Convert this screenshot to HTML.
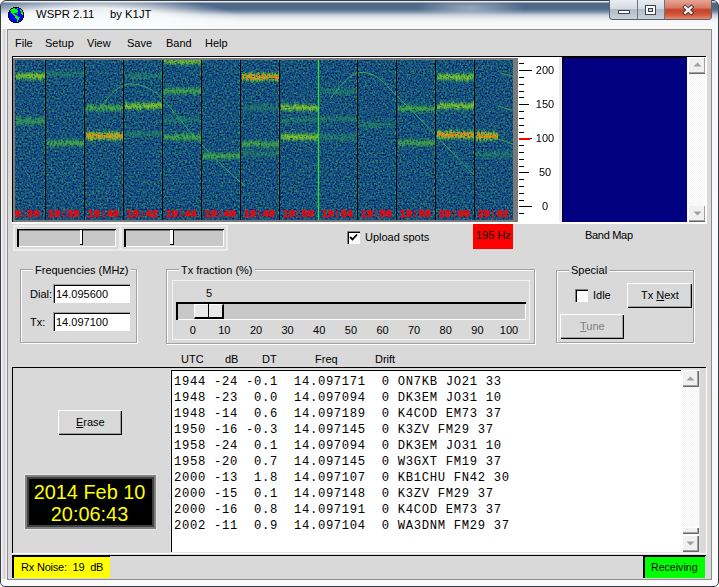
<!DOCTYPE html>
<html><head><meta charset="utf-8">
<style>
html,body{margin:0;padding:0;width:719px;height:587px;overflow:hidden;background:#fff;}
body{position:relative;font-family:"Liberation Sans",sans-serif;font-size:11px;color:#000;}
.a{position:absolute;}
.t{position:absolute;white-space:pre;line-height:13px;}
.grp{position:absolute;border:1px solid #a0a0a0;box-shadow:inset 1px 1px 0 #fff,1px 1px 0 #fff;}
.grpt{position:absolute;background:#d9d9d9;padding:0 2px;white-space:pre;line-height:13px;}
.btn{position:absolute;background:#d9d9d9;box-sizing:border-box;border-top:1px solid #fff;border-left:1px solid #fff;box-shadow:inset -1px -1px 0 #000,inset -2px -2px 0 #a0a0a0;text-align:center;line-height:13px;}
.inp{position:absolute;background:#fff;box-sizing:border-box;border-top:1px solid #a0a0a0;border-left:1px solid #a0a0a0;box-shadow:inset 1px 1px 0 #000;}
.mono{font-family:"Liberation Mono",monospace;font-size:13.33px;line-height:16px;white-space:pre;}
.sbtn{position:absolute;box-sizing:border-box;width:17px;height:17px;background:#f0f0f0;border-top:1px solid #fff;border-left:1px solid #fff;box-shadow:inset -1px -1px 0 #696969,inset -2px -2px 0 #a0a0a0;}
.track{position:absolute;background-color:#f4f4f4;background-image:linear-gradient(45deg,#fff 25%,transparent 25%,transparent 75%,#fff 75%),linear-gradient(45deg,#fff 25%,transparent 25%,transparent 75%,#fff 75%);background-size:2px 2px;background-position:0 0,1px 1px;}
.tk{position:absolute;height:1px;background:#000;left:519px;}
.lb{position:absolute;width:20px;text-align:center;line-height:12px;font-size:11px;}
.sl{position:absolute;width:20px;text-align:center;line-height:12px;font-size:11px;}
</style></head>
<body>
<div class="a" style="left:0;top:0;width:717px;height:585px;border:1px solid #3a3f46;border-radius:6px 6px 5px 5px;background:linear-gradient(#f0f3f6 0px,#e0e6ec 1px,#4f6989 2px,#4f6989 8px,#7d92aa 11px,#c5d0dc 14px,#eef1f4 18px,#f7f8f9 22px,#f8f8f8 28px,#fafafa 100%);"></div>
<div class="a" style="left:1px;top:1px;width:300px;height:28px;background:radial-gradient(ellipse 150px 22px at 90px 18px,rgba(250,251,252,0.92) 50%,rgba(250,251,252,0) 100%);"></div>
<div class="a" style="left:400px;top:1px;width:140px;height:16px;background:radial-gradient(ellipse 55px 10px at 70px 7px,rgba(240,244,248,0.45),rgba(240,244,248,0) 100%);"></div>
<div class="a" style="left:1px;top:29px;width:6px;height:550px;background:linear-gradient(90deg,#ececec 0px,#f8f8f8 1px,#dcd8dc 2px,#d4d0d4 4px,#ececec 5px,#f6f6f6 6px);"></div>
<!-- globe icon -->
<svg class="a" style="left:8px;top:7px" width="16" height="16" viewBox="0 0 16 16" shape-rendering="crispEdges"><rect x="5" y="0" width="6" height="1" fill="#000000"/><rect x="3" y="1" width="2" height="1" fill="#000000"/><rect x="5" y="1" width="2" height="1" fill="#00ff00"/><rect x="7" y="1" width="2" height="1" fill="#0000ff"/><rect x="9" y="1" width="1" height="1" fill="#00ff00"/><rect x="10" y="1" width="2" height="1" fill="#0000ff"/><rect x="12" y="1" width="1" height="1" fill="#000000"/><rect x="2" y="2" width="1" height="1" fill="#000000"/><rect x="3" y="2" width="6" height="1" fill="#00ff00"/><rect x="9" y="2" width="3" height="1" fill="#0000ff"/><rect x="12" y="2" width="1" height="1" fill="#00ff00"/><rect x="13" y="2" width="1" height="1" fill="#000000"/><rect x="1" y="3" width="1" height="1" fill="#000000"/><rect x="2" y="3" width="8" height="1" fill="#00ff00"/><rect x="10" y="3" width="2" height="1" fill="#0000ff"/><rect x="12" y="3" width="2" height="1" fill="#00ff00"/><rect x="14" y="3" width="1" height="1" fill="#000000"/><rect x="1" y="4" width="1" height="1" fill="#000000"/><rect x="2" y="4" width="1" height="1" fill="#0000ff"/><rect x="3" y="4" width="7" height="1" fill="#00ff00"/><rect x="10" y="4" width="3" height="1" fill="#0000ff"/><rect x="13" y="4" width="1" height="1" fill="#00ff00"/><rect x="14" y="4" width="1" height="1" fill="#000000"/><rect x="0" y="5" width="1" height="1" fill="#000000"/><rect x="1" y="5" width="2" height="1" fill="#0000ff"/><rect x="3" y="5" width="6" height="1" fill="#00ff00"/><rect x="9" y="5" width="4" height="1" fill="#0000ff"/><rect x="13" y="5" width="2" height="1" fill="#00ff00"/><rect x="15" y="5" width="1" height="1" fill="#000000"/><rect x="0" y="6" width="1" height="1" fill="#000000"/><rect x="1" y="6" width="3" height="1" fill="#0000ff"/><rect x="4" y="6" width="2" height="1" fill="#00ff00"/><rect x="6" y="6" width="3" height="1" fill="#0000ff"/><rect x="9" y="6" width="1" height="1" fill="#00ff00"/><rect x="10" y="6" width="3" height="1" fill="#0000ff"/><rect x="13" y="6" width="2" height="1" fill="#00ff00"/><rect x="15" y="6" width="1" height="1" fill="#000000"/><rect x="0" y="7" width="1" height="1" fill="#000000"/><rect x="1" y="7" width="4" height="1" fill="#0000ff"/><rect x="5" y="7" width="2" height="1" fill="#00ff00"/><rect x="7" y="7" width="7" height="1" fill="#0000ff"/><rect x="14" y="7" width="1" height="1" fill="#00ff00"/><rect x="15" y="7" width="1" height="1" fill="#000000"/><rect x="0" y="8" width="1" height="1" fill="#000000"/><rect x="1" y="8" width="5" height="1" fill="#0000ff"/><rect x="6" y="8" width="3" height="1" fill="#00ff00"/><rect x="9" y="8" width="6" height="1" fill="#0000ff"/><rect x="15" y="8" width="1" height="1" fill="#000000"/><rect x="0" y="9" width="1" height="1" fill="#000000"/><rect x="1" y="9" width="6" height="1" fill="#0000ff"/><rect x="7" y="9" width="3" height="1" fill="#00ff00"/><rect x="10" y="9" width="5" height="1" fill="#0000ff"/><rect x="15" y="9" width="1" height="1" fill="#000000"/><rect x="0" y="10" width="1" height="1" fill="#000000"/><rect x="1" y="10" width="6" height="1" fill="#0000ff"/><rect x="7" y="10" width="5" height="1" fill="#00ff00"/><rect x="12" y="10" width="3" height="1" fill="#0000ff"/><rect x="15" y="10" width="1" height="1" fill="#000000"/><rect x="1" y="11" width="1" height="1" fill="#000000"/><rect x="2" y="11" width="6" height="1" fill="#0000ff"/><rect x="8" y="11" width="3" height="1" fill="#00ff00"/><rect x="11" y="11" width="3" height="1" fill="#0000ff"/><rect x="14" y="11" width="1" height="1" fill="#000000"/><rect x="1" y="12" width="1" height="1" fill="#000000"/><rect x="2" y="12" width="7" height="1" fill="#0000ff"/><rect x="9" y="12" width="2" height="1" fill="#00ff00"/><rect x="11" y="12" width="3" height="1" fill="#0000ff"/><rect x="14" y="12" width="1" height="1" fill="#000000"/><rect x="2" y="13" width="1" height="1" fill="#000000"/><rect x="3" y="13" width="6" height="1" fill="#0000ff"/><rect x="9" y="13" width="1" height="1" fill="#00ff00"/><rect x="10" y="13" width="3" height="1" fill="#0000ff"/><rect x="13" y="13" width="1" height="1" fill="#000000"/><rect x="3" y="14" width="2" height="1" fill="#000000"/><rect x="5" y="14" width="4" height="1" fill="#0000ff"/><rect x="9" y="14" width="1" height="1" fill="#00ff00"/><rect x="10" y="14" width="1" height="1" fill="#0000ff"/><rect x="11" y="14" width="2" height="1" fill="#000000"/><rect x="5" y="15" width="6" height="1" fill="#000000"/></svg>
<div class="t" style="left:36px;top:8px;font-size:11.3px;">WSPR 2.11</div>
<div class="t" style="left:110px;top:8px;font-size:11.3px;">by K1JT</div>

<!-- window buttons -->
<div class="a" style="left:609px;top:0px;width:101px;height:19px;border:1px solid #5a6470;border-top:none;border-radius:0 0 4px 4px;overflow:hidden;background:#6a7480;">
 <div class="a" style="left:0;top:0;width:27px;height:19px;background:linear-gradient(#e8edf2,#d3dae2 45%,#b2bcc7 50%,#c9d2dc 100%);"></div>
 <div class="a" style="left:28px;top:0;width:26px;height:19px;background:linear-gradient(#e8edf2,#d3dae2 45%,#b2bcc7 50%,#c9d2dc 100%);"></div>
 <div class="a" style="left:55px;top:0;width:46px;height:19px;background:linear-gradient(#e8a594,#d77a66 40%,#c2412a 52%,#d45a3e 80%,#e89070 100%);"></div>
 <div class="a" style="left:8px;top:10px;width:10px;height:2px;background:#fff;border:1px solid #3a4250;"></div>
 <div class="a" style="left:35px;top:5px;width:9px;height:8px;border:1px solid #3a4250;box-shadow:inset 0 0 0 2px #fff,inset 0 0 0 3px #3a4250;background:#ccd3db;"></div>
 <svg class="a" style="left:72px;top:4px" width="13" height="12" viewBox="0 0 13 12"><path d="M3.2 3.2 L9.3 8.8 M9.3 3.2 L3.2 8.8" stroke="#4a3838" stroke-width="4.2" stroke-linecap="square"/><path d="M3.2 3.2 L9.3 8.8 M9.3 3.2 L3.2 8.8" stroke="#f4f4f4" stroke-width="2.3" stroke-linecap="square"/></svg>
</div>

<!-- client -->
<div class="a" style="left:7px;top:29px;width:703px;height:549px;background:#d9d9d9;border:1px solid #8c8c8c;"></div>

<!-- menu -->
<div class="t" style="left:15px;top:37px;">File</div>
<div class="t" style="left:45px;top:37px;">Setup</div>
<div class="t" style="left:87px;top:37px;">View</div>
<div class="t" style="left:127px;top:37px;">Save</div>
<div class="t" style="left:166px;top:37px;">Band</div>
<div class="t" style="left:205px;top:37px;">Help</div>

<!-- waterfall frame -->
<div class="a" style="left:12px;top:56px;width:695px;height:168px;background:#fff;"></div>
<div class="a" style="left:12px;top:56px;width:694px;height:166px;background:#000;"></div>
<div class="a" style="left:13px;top:57px;width:505px;height:165px;background:#fff;"></div>
<div class="a" style="left:13px;top:58px;width:505px;height:164px;background:#7a7a7a;"></div>
<svg class="a" style="left:15px;top:60px" width="498" height="160" viewBox="15 60 498 160">
<defs><filter id="nz" x="15" y="60" width="498" height="160" filterUnits="userSpaceOnUse" color-interpolation-filters="sRGB"><feTurbulence type="fractalNoise" baseFrequency="0.55" numOctaves="2" seed="7" result="t"/><feColorMatrix type="matrix" values="2.0 0 0 0 -0.5  2.0 0 0 0 -0.5  2.0 0 0 0 -0.5  0 0 0 0 1"/><feComponentTransfer><feFuncR type="table" tableValues="0.04 0.07 0.10 0.16"/><feFuncG type="table" tableValues="0.10 0.25 0.38 0.56"/><feFuncB type="table" tableValues="0.42 0.50 0.50 0.34"/></feComponentTransfer></filter><filter id="vs" x="15" y="60" width="498" height="160" filterUnits="userSpaceOnUse" color-interpolation-filters="sRGB"><feTurbulence type="fractalNoise" baseFrequency="0.9 0.6" numOctaves="1" seed="5" result="n"/><feTurbulence type="fractalNoise" baseFrequency="0.35 0.015" numOctaves="1" seed="9" result="v"/><feComposite in="n" in2="v" operator="arithmetic" k1="3" k2="0" k3="0" k4="0" result="m"/><feColorMatrix in="m" type="matrix" values="0 0 0 0 0.19  0 0 0 0 0.63  0 0 0 0 0.31  4 0 0 0 -1.6"/></filter><filter id="bl" x="15" y="60" width="498" height="160" filterUnits="userSpaceOnUse" color-interpolation-filters="sRGB"><feTurbulence type="fractalNoise" baseFrequency="0.6 0.08" numOctaves="1" seed="4" result="dn"/><feColorMatrix in="dn" type="matrix" values="0 0 0 0 0.5  2 0 0 0 -0.5  0 0 0 0 0  0 0 0 0 1" result="dm"/><feDisplacementMap in="SourceGraphic" in2="dm" scale="4" xChannelSelector="R" yChannelSelector="G" result="disp"/><feGaussianBlur in="disp" stdDeviation="0.6 1.4" result="b"/><feTurbulence type="fractalNoise" baseFrequency="0.55" numOctaves="2" seed="7" result="n"/><feColorMatrix in="n" type="matrix" values="0 0 0 0 0  0 0 0 0 0  0 0 0 0 0  3.5 0 0 0 -0.45" result="na"/><feComposite in="b" in2="na" operator="in"/></filter><filter id="bl2" x="15" y="60" width="498" height="160" filterUnits="userSpaceOnUse" color-interpolation-filters="sRGB"><feTurbulence type="fractalNoise" baseFrequency="0.6 0.08" numOctaves="1" seed="4" result="dn"/><feColorMatrix in="dn" type="matrix" values="0 0 0 0 0.5  2 0 0 0 -0.5  0 0 0 0 0  0 0 0 0 1" result="dm"/><feDisplacementMap in="SourceGraphic" in2="dm" scale="4" xChannelSelector="R" yChannelSelector="G" result="disp"/><feGaussianBlur in="disp" stdDeviation="0.5 0.9" result="b"/><feTurbulence type="fractalNoise" baseFrequency="0.55" numOctaves="2" seed="7" result="n"/><feColorMatrix in="n" type="matrix" values="0 0 0 0 0  0 0 0 0 0  0 0 0 0 0  4 0 0 0 -1.1" result="na"/><feComposite in="b" in2="na" operator="in"/></filter><filter id="bl3" x="15" y="60" width="498" height="160" filterUnits="userSpaceOnUse" color-interpolation-filters="sRGB"><feTurbulence type="fractalNoise" baseFrequency="0.6 0.08" numOctaves="1" seed="4" result="dn"/><feColorMatrix in="dn" type="matrix" values="0 0 0 0 0.5  2 0 0 0 -0.5  0 0 0 0 0  0 0 0 0 1" result="dm"/><feDisplacementMap in="SourceGraphic" in2="dm" scale="4" xChannelSelector="R" yChannelSelector="G" result="disp"/><feGaussianBlur in="disp" stdDeviation="0.5 0.7" result="b"/><feTurbulence type="fractalNoise" baseFrequency="0.55" numOctaves="2" seed="7" result="n"/><feColorMatrix in="n" type="matrix" values="0 0 0 0 0  0 0 0 0 0  0 0 0 0 0  5 0 0 0 -2.1" result="na"/><feComposite in="b" in2="na" operator="in"/></filter></defs>
<rect x="15" y="60" width="498" height="160" fill="#1a5585"/>
<rect x="15" y="60" width="498" height="160" filter="url(#nz)"/>
<rect x="15" y="60" width="498" height="160" fill="#30a050" filter="url(#vs)" opacity="0.35"/>
<g filter="url(#bl)"><rect x="16" y="73" width="29" height="6" fill="#40b040" opacity="1"/><rect x="16" y="117.5" width="29" height="7" fill="#38a050" opacity="0.75"/><rect x="47" y="72" width="37" height="4" fill="#2a9a5a" opacity="0.6"/><rect x="47" y="140.5" width="37" height="5" fill="#38a845" opacity="0.9"/><rect x="86" y="105.5" width="37" height="5" fill="#38a845" opacity="0.9"/><rect x="86" y="132.5" width="37" height="7" fill="#48b038" opacity="1"/><rect x="125" y="103" width="37" height="6" fill="#40b040" opacity="1"/><rect x="125" y="74" width="37" height="4" fill="#2a9a5a" opacity="0.6"/><rect x="125" y="132" width="37" height="4" fill="#2a9a5a" opacity="0.6"/><rect x="164" y="58" width="37" height="6" fill="#40b040" opacity="1"/><rect x="164" y="88.5" width="37" height="5" fill="#38a845" opacity="0.9"/><rect x="164" y="118" width="37" height="4" fill="#2a9a5a" opacity="0.6"/><rect x="164" y="134.5" width="37" height="5" fill="#38a845" opacity="0.9"/><rect x="203" y="153.5" width="37" height="5" fill="#38a845" opacity="0.9"/><rect x="242" y="73.5" width="37" height="7" fill="#48b038" opacity="1"/><rect x="242" y="106" width="37" height="4" fill="#2a9a5a" opacity="0.6"/><rect x="242" y="141.5" width="37" height="5" fill="#38a845" opacity="0.9"/><rect x="242" y="152" width="37" height="4" fill="#2a9a5a" opacity="0.6"/><rect x="281" y="104.5" width="37" height="6" fill="#40b040" opacity="1"/><rect x="281" y="134" width="37" height="6" fill="#40b040" opacity="1"/><rect x="281" y="118" width="37" height="4" fill="#2a9a5a" opacity="0.6"/><rect x="320" y="89" width="37" height="4" fill="#2a9a5a" opacity="0.6"/><rect x="320" y="117" width="37" height="4" fill="#2a9a5a" opacity="0.6"/><rect x="320" y="135" width="37" height="4" fill="#2a9a5a" opacity="0.6"/><rect x="359" y="123" width="37" height="4" fill="#2a9a5a" opacity="0.6"/><rect x="398" y="106.0" width="37" height="5" fill="#38a845" opacity="0.9"/><rect x="398" y="140.5" width="37" height="5" fill="#38a845" opacity="0.9"/><rect x="437" y="74" width="37" height="6" fill="#40b040" opacity="1"/><rect x="437" y="103" width="37" height="6" fill="#40b040" opacity="1"/><rect x="437" y="131.5" width="37" height="7" fill="#48b038" opacity="1"/><rect x="476" y="132.5" width="22" height="7" fill="#48b038" opacity="1"/><rect x="476" y="153" width="37" height="4" fill="#2a9a5a" opacity="0.6"/></g>
<g filter="url(#bl2)"><rect x="16" y="74.5" width="29" height="3" fill="#a8c820" opacity="0.75"/><rect x="47" y="142" width="37" height="2" fill="#80c030" opacity="0.35"/><rect x="86" y="107" width="37" height="2" fill="#80c030" opacity="0.35"/><rect x="86" y="133.5" width="37" height="5" fill="#c8c818" opacity="1"/><rect x="125" y="104.5" width="37" height="3" fill="#a8c820" opacity="0.75"/><rect x="164" y="59.5" width="37" height="3" fill="#a8c820" opacity="0.75"/><rect x="164" y="90" width="37" height="2" fill="#80c030" opacity="0.35"/><rect x="164" y="136" width="37" height="2" fill="#80c030" opacity="0.35"/><rect x="203" y="155" width="37" height="2" fill="#80c030" opacity="0.35"/><rect x="242" y="74.5" width="37" height="5" fill="#c8c818" opacity="1"/><rect x="242" y="143" width="37" height="2" fill="#80c030" opacity="0.35"/><rect x="281" y="106.0" width="37" height="3" fill="#a8c820" opacity="0.75"/><rect x="281" y="135.5" width="37" height="3" fill="#a8c820" opacity="0.75"/><rect x="398" y="107.5" width="37" height="2" fill="#80c030" opacity="0.35"/><rect x="398" y="142" width="37" height="2" fill="#80c030" opacity="0.35"/><rect x="437" y="75.5" width="37" height="3" fill="#a8c820" opacity="0.75"/><rect x="437" y="104.5" width="37" height="3" fill="#a8c820" opacity="0.75"/><rect x="437" y="132.5" width="37" height="5" fill="#c8c818" opacity="1"/><rect x="476" y="133.5" width="22" height="5" fill="#c8c818" opacity="1"/></g>
<g filter="url(#bl3)"><rect x="16" y="75" width="29" height="2" fill="#d8a018" opacity="0.35"/><rect x="86" y="134" width="37" height="4" fill="#f06818" opacity="1"/><rect x="125" y="105" width="37" height="2" fill="#d8a018" opacity="0.35"/><rect x="164" y="60" width="37" height="2" fill="#d8a018" opacity="0.35"/><rect x="242" y="75" width="37" height="4" fill="#f06818" opacity="1"/><rect x="281" y="106.5" width="37" height="2" fill="#d8a018" opacity="0.35"/><rect x="281" y="136" width="37" height="2" fill="#d8a018" opacity="0.35"/><rect x="437" y="76" width="37" height="2" fill="#d8a018" opacity="0.35"/><rect x="437" y="105" width="37" height="2" fill="#d8a018" opacity="0.35"/><rect x="437" y="133" width="37" height="4" fill="#f06818" opacity="1"/><rect x="476" y="134" width="22" height="4" fill="#f06818" opacity="1"/></g>
<path d="M100,108 C110,94 120,84 130,84 C145,84 155,91 163,99 C178,116 200,148 245,186" fill="none" stroke="#3cb455" stroke-width="1" opacity="0.9"/>
<path d="M330,99 C340,86 350,73 361,72.5 C373,72 381,79 390,89 C400,100 410,108 420,119 L474,175" fill="none" stroke="#3cb455" stroke-width="1" opacity="0.9"/>
<path d="M498,106 L513,110.5 M498,139 L513,144 M500,73 L513,76" fill="none" stroke="#40b040" stroke-width="1.2" opacity="0.75"/>
<line x1="44.5" y1="60" x2="44.5" y2="220" stroke="#30c040" stroke-width="1" stroke-dasharray="2 5 1 3 3 6" opacity="0.6"/>
<line x1="45.5" y1="60" x2="45.5" y2="220" stroke="#000" stroke-width="1"/>
<line x1="83.5" y1="60" x2="83.5" y2="220" stroke="#30c040" stroke-width="1" stroke-dasharray="2 5 1 3 3 6" opacity="0.6"/>
<line x1="84.5" y1="60" x2="84.5" y2="220" stroke="#000" stroke-width="1"/>
<line x1="122.5" y1="60" x2="122.5" y2="220" stroke="#30c040" stroke-width="1" stroke-dasharray="2 5 1 3 3 6" opacity="0.6"/>
<line x1="123.5" y1="60" x2="123.5" y2="220" stroke="#000" stroke-width="1"/>
<line x1="161.5" y1="60" x2="161.5" y2="220" stroke="#30c040" stroke-width="1" stroke-dasharray="2 5 1 3 3 6" opacity="0.6"/>
<line x1="162.5" y1="60" x2="162.5" y2="220" stroke="#000" stroke-width="1"/>
<line x1="200.5" y1="60" x2="200.5" y2="220" stroke="#30c040" stroke-width="1" stroke-dasharray="2 5 1 3 3 6" opacity="0.6"/>
<line x1="201.5" y1="60" x2="201.5" y2="220" stroke="#000" stroke-width="1"/>
<line x1="239.5" y1="60" x2="239.5" y2="220" stroke="#30c040" stroke-width="1" stroke-dasharray="2 5 1 3 3 6" opacity="0.6"/>
<line x1="240.5" y1="60" x2="240.5" y2="220" stroke="#000" stroke-width="1"/>
<line x1="278.5" y1="60" x2="278.5" y2="220" stroke="#30c040" stroke-width="1" stroke-dasharray="2 5 1 3 3 6" opacity="0.6"/>
<line x1="279.5" y1="60" x2="279.5" y2="220" stroke="#000" stroke-width="1"/>
<line x1="356.5" y1="60" x2="356.5" y2="220" stroke="#30c040" stroke-width="1" stroke-dasharray="2 5 1 3 3 6" opacity="0.6"/>
<line x1="357.5" y1="60" x2="357.5" y2="220" stroke="#000" stroke-width="1"/>
<line x1="395.5" y1="60" x2="395.5" y2="220" stroke="#30c040" stroke-width="1" stroke-dasharray="2 5 1 3 3 6" opacity="0.6"/>
<line x1="396.5" y1="60" x2="396.5" y2="220" stroke="#000" stroke-width="1"/>
<line x1="434.5" y1="60" x2="434.5" y2="220" stroke="#30c040" stroke-width="1" stroke-dasharray="2 5 1 3 3 6" opacity="0.6"/>
<line x1="435.5" y1="60" x2="435.5" y2="220" stroke="#000" stroke-width="1"/>
<line x1="473.5" y1="60" x2="473.5" y2="220" stroke="#30c040" stroke-width="1" stroke-dasharray="2 5 1 3 3 6" opacity="0.6"/>
<line x1="474.5" y1="60" x2="474.5" y2="220" stroke="#000" stroke-width="1"/>
<line x1="318.5" y1="60" x2="318.5" y2="220" stroke="#30e030" stroke-width="1.3"/>
<text x="14.5" y="216.8" font-family="Liberation Mono" font-weight="bold" font-size="10.5" fill="#ff0000" stroke="#ff0000" stroke-width="0.45">9:36</text>
<text x="48.0" y="216.8" font-family="Liberation Mono" font-weight="bold" font-size="10.5" fill="#ff0000" stroke="#ff0000" stroke-width="0.45">19:38</text>
<text x="87.5" y="216.8" font-family="Liberation Mono" font-weight="bold" font-size="10.5" fill="#ff0000" stroke="#ff0000" stroke-width="0.45">19:40</text>
<text x="126.5" y="216.8" font-family="Liberation Mono" font-weight="bold" font-size="10.5" fill="#ff0000" stroke="#ff0000" stroke-width="0.45">19:42</text>
<text x="165.5" y="216.8" font-family="Liberation Mono" font-weight="bold" font-size="10.5" fill="#ff0000" stroke="#ff0000" stroke-width="0.45">19:44</text>
<text x="204.5" y="216.8" font-family="Liberation Mono" font-weight="bold" font-size="10.5" fill="#ff0000" stroke="#ff0000" stroke-width="0.45">19:46</text>
<text x="243.5" y="216.8" font-family="Liberation Mono" font-weight="bold" font-size="10.5" fill="#ff0000" stroke="#ff0000" stroke-width="0.45">19:48</text>
<text x="282.5" y="216.8" font-family="Liberation Mono" font-weight="bold" font-size="10.5" fill="#ff0000" stroke="#ff0000" stroke-width="0.45">19:50</text>
<text x="321.5" y="216.8" font-family="Liberation Mono" font-weight="bold" font-size="10.5" fill="#ff0000" stroke="#ff0000" stroke-width="0.45">19:54</text>
<text x="360.5" y="216.8" font-family="Liberation Mono" font-weight="bold" font-size="10.5" fill="#ff0000" stroke="#ff0000" stroke-width="0.45">19:56</text>
<text x="399.5" y="216.8" font-family="Liberation Mono" font-weight="bold" font-size="10.5" fill="#ff0000" stroke="#ff0000" stroke-width="0.45">19:58</text>
<text x="438.5" y="216.8" font-family="Liberation Mono" font-weight="bold" font-size="10.5" fill="#ff0000" stroke="#ff0000" stroke-width="0.45">20:00</text>
<text x="477.5" y="216.8" font-family="Liberation Mono" font-weight="bold" font-size="10.5" fill="#ff0000" stroke="#ff0000" stroke-width="0.45">20:02</text>
</svg>
<!-- scale -->
<div class="a" style="left:518px;top:57px;width:44px;height:165px;background:#fff;"></div>
<div class="a" style="left:559px;top:57px;width:3px;height:165px;background:#ececec;"></div>
<div class="tk" style="top:213px;width:5px;background:#000"></div>
<div class="tk" style="top:206px;width:13px;background:#000"></div>
<div class="lb" style="left:535px;top:200px;">0</div>
<div class="tk" style="top:200px;width:5px;background:#000"></div>
<div class="tk" style="top:193px;width:5px;background:#000"></div>
<div class="tk" style="top:186px;width:5px;background:#000"></div>
<div class="tk" style="top:179px;width:5px;background:#000"></div>
<div class="tk" style="top:172px;width:10px;background:#000"></div>
<div class="lb" style="left:535px;top:166px;">50</div>
<div class="tk" style="top:166px;width:5px;background:#000"></div>
<div class="tk" style="top:159px;width:5px;background:#000"></div>
<div class="tk" style="top:152px;width:5px;background:#000"></div>
<div class="tk" style="top:145px;width:5px;background:#000"></div>
<div class="tk" style="top:138px;width:13px;background:#000"></div>
<div class="lb" style="left:535px;top:132px;">100</div>
<div class="tk" style="top:132px;width:5px;background:#000"></div>
<div class="tk" style="top:125px;width:5px;background:#000"></div>
<div class="tk" style="top:118px;width:5px;background:#000"></div>
<div class="tk" style="top:111px;width:5px;background:#000"></div>
<div class="tk" style="top:104px;width:10px;background:#000"></div>
<div class="lb" style="left:535px;top:98px;">150</div>
<div class="tk" style="top:97px;width:5px;background:#000"></div>
<div class="tk" style="top:91px;width:5px;background:#000"></div>
<div class="tk" style="top:84px;width:5px;background:#000"></div>
<div class="tk" style="top:77px;width:5px;background:#000"></div>
<div class="tk" style="top:70px;width:13px;background:#000"></div>
<div class="lb" style="left:535px;top:64px;">200</div>
<div class="tk" style="top:63px;width:5px;background:#000"></div>
<div class="a" style="left:519px;top:138px;width:11px;height:2px;background:#ff0000"></div>
<!-- band map -->
<div class="a" style="left:562px;top:57px;width:125px;height:165px;background:#000080;box-sizing:border-box;border-left:1px solid #000;border-top:1px solid #000;"></div>
<!-- scrollbar -->
<div class="track" style="left:687px;top:57px;width:19px;height:165px;"></div>
<div class="sbtn" style="left:688px;top:57px;width:18px;"></div>
<svg class="a" style="left:691px;top:58px" width="13" height="13"><path d="M2.5 8.5 L6.5 4.5 L10.5 8.5 Z" fill="#a0a0a0"/></svg>
<div class="sbtn" style="left:688px;top:205px;width:18px;"></div>
<svg class="a" style="left:691px;top:207px" width="13" height="13"><path d="M2.5 4.5 L6.5 8.5 L10.5 4.5 Z" fill="#a0a0a0"/></svg>
<div class="a" style="left:705px;top:57px;width:1px;height:165px;background:#fff;"></div>

<!-- sliders -->
<div class="a" style="left:13px;top:225px;width:215px;height:26px;background:#ececec;"></div>
<div class="a" style="left:15px;top:227px;width:104px;height:22px;background:#d9d9d9;"></div>
<div class="a" style="left:122px;top:227px;width:104px;height:22px;background:#d9d9d9;"></div>
<div class="a" style="left:17px;top:229px;width:99px;height:18px;background:#c8c8c8;border-top:1px solid #000;border-left:2px solid #000;box-sizing:border-box;box-shadow:inset -1px -1px 0 #fff,inset 0 1px 0 #707070;"></div>
<div class="a" style="left:124px;top:229px;width:100px;height:18px;background:#c8c8c8;border-top:1px solid #000;border-left:2px solid #000;box-sizing:border-box;box-shadow:inset -1px -1px 0 #fff,inset 0 1px 0 #707070;"></div>
<div class="a" style="left:80px;top:230px;width:3px;height:15px;background:#fff;border-right:1px solid #000;border-bottom:1px solid #000;box-sizing:border-box;"></div>
<div class="a" style="left:170px;top:230px;width:4px;height:15px;background:#fff;border-right:1px solid #000;border-bottom:1px solid #000;box-sizing:border-box;"></div>

<!-- upload spots -->
<div class="a" style="left:347px;top:231px;width:13px;height:13px;background:#fff;box-sizing:border-box;border-top:1px solid #808080;border-left:1px solid #808080;box-shadow:inset 1px 1px 0 #000;"></div>
<svg class="a" style="left:349px;top:233px" width="9" height="9"><path d="M1 4 L3.5 6.5 L8 1.5" fill="none" stroke="#000" stroke-width="1.8"/></svg>
<div class="t" style="left:365px;top:231px;">Upload spots</div>
<div class="a" style="left:473px;top:224px;width:40px;height:25px;background:#ff0000;"></div>
<div class="t" style="left:476px;top:229px;">195 Hz</div>
<div class="t" style="left:585px;top:229px;letter-spacing:-0.3px;">Band Map</div>

<!-- Frequencies group -->
<div class="grp" style="left:20px;top:269px;width:115px;height:72px;"></div>
<div class="grpt" style="left:33px;top:264px;">Frequencies (MHz)</div>
<div class="t" style="left:30px;top:288px;">Dial:</div>
<div class="inp" style="left:53px;top:284px;width:77px;height:19px;"></div>
<div class="t" style="left:56px;top:288px;">14.095600</div>
<div class="t" style="left:30px;top:316px;">Tx:</div>
<div class="inp" style="left:53px;top:312px;width:77px;height:19px;"></div>
<div class="t" style="left:56px;top:316px;">14.097100</div>

<!-- Tx fraction group -->
<div class="grp" style="left:166px;top:269px;width:367px;height:73px;"></div>
<div class="grpt" style="left:179px;top:264px;">Tx fraction (%)</div>
<div class="a" style="left:172px;top:280px;width:358px;height:60px;box-sizing:border-box;border-top:1px solid #f2f2f2;border-left:1px solid #f2f2f2;border-right:1px solid #f2f2f2;border-bottom:1px solid #f2f2f2;"></div>
<div class="t" style="left:206px;top:287px;">5</div>
<div class="a" style="left:176px;top:302px;width:350px;height:18px;background:#c8c8c8;box-sizing:border-box;border-top:2px solid #000;border-left:2px solid #000;box-shadow:inset -1px -1px 0 #fff;"></div>
<div class="a" style="left:194px;top:304px;width:30px;height:15px;background:#e8e8e8;box-sizing:border-box;border-top:1px solid #fff;border-left:1px solid #fff;border-right:2px solid #000;border-bottom:2px solid #000;"></div>
<div class="a" style="left:208px;top:304px;width:1px;height:13px;background:#000;"></div>
<div class="sl" style="left:182.7px;top:324px;">0</div>
<div class="sl" style="left:214.3px;top:324px;">10</div>
<div class="sl" style="left:246.0px;top:324px;">20</div>
<div class="sl" style="left:277.6px;top:324px;">30</div>
<div class="sl" style="left:309.2px;top:324px;">40</div>
<div class="sl" style="left:340.9px;top:324px;">50</div>
<div class="sl" style="left:372.5px;top:324px;">60</div>
<div class="sl" style="left:404.1px;top:324px;">70</div>
<div class="sl" style="left:435.7px;top:324px;">80</div>
<div class="sl" style="left:467.4px;top:324px;">90</div>
<div class="sl" style="left:499.0px;top:324px;">100</div>

<!-- Special group -->
<div class="grp" style="left:556px;top:270px;width:136px;height:71px;"></div>
<div class="grpt" style="left:569px;top:264px;">Special</div>
<div class="a" style="left:575px;top:289px;width:13px;height:13px;background:#fff;box-sizing:border-box;border-top:1px solid #808080;border-left:1px solid #808080;box-shadow:inset 1px 1px 0 #000;"></div>
<div class="t" style="left:593px;top:289px;">Idle</div>
<div class="btn" style="left:627px;top:283px;width:65px;height:25px;"></div>
<div class="t" style="left:641px;top:289px;">Tx <u>N</u>ext</div>
<div class="btn" style="left:560px;top:314px;width:64px;height:25px;"></div>
<div class="t" style="left:580px;top:320px;color:#7d7d7d;"><u>T</u>une</div>

<!-- headers -->
<div class="t" style="left:181px;top:353px;">UTC</div>
<div class="t" style="left:225px;top:353px;">dB</div>
<div class="t" style="left:262px;top:353px;">DT</div>
<div class="t" style="left:315px;top:353px;">Freq</div>
<div class="t" style="left:375px;top:353px;">Drift</div>

<!-- lower panel -->
<div class="a" style="left:12px;top:367px;width:695px;height:187px;background:#fff;"></div>
<div class="a" style="left:12px;top:367px;width:694px;height:186px;background:#000;"></div>
<div class="a" style="left:13px;top:368px;width:693px;height:185px;background:#d9d9d9;"></div>
<div class="a" style="left:170px;top:369px;width:530px;height:184px;background:#e4e4e4;"></div>
<div class="a" style="left:171px;top:370px;width:528px;height:182px;background:#fff;border-top:1px solid #000;border-left:1px solid #000;box-sizing:border-box;"></div>
<div class="a mono" style="left:174px;top:374px;font-size:12.2px;letter-spacing:0.68px;">1944 -24 -0.1  14.097171  0 ON7KB JO21 33
1948 -23  0.0  14.097094  0 DK3EM JO31 10
1948 -14  0.6  14.097189  0 K4COD EM73 37
1950 -16 -0.3  14.097145  0 K3ZV FM29 37
1958 -24  0.1  14.097094  0 DK3EM JO31 10
1958 -20  0.7  14.097145  0 W3GXT FM19 37
2000 -13  1.8  14.097107  0 KB1CHU FN42 30
2000 -15  0.1  14.097148  0 K3ZV FM29 37
2000 -16  0.8  14.097191  0 K4COD EM73 37
2002 -11  0.9  14.097104  0 WA3DNM FM29 37</div>
<!-- text scrollbar -->
<div class="track" style="left:681px;top:370px;width:18px;height:182px;"></div>
<div class="sbtn" style="left:682px;top:370px;box-shadow:inset -1px -1px 0 #696969,inset -2px -2px 0 #a0a0a0;"></div>
<svg class="a" style="left:684px;top:372px" width="13" height="13"><path d="M2.5 8.5 L6.5 4.5 L10.5 8.5 Z" fill="#a0a0a0"/></svg>
<div class="sbtn" style="left:682px;top:527px;height:7px;"></div>
<div class="sbtn" style="left:682px;top:535px;"></div>
<svg class="a" style="left:684px;top:537px" width="13" height="13"><path d="M2.5 4.5 L6.5 8.5 L10.5 4.5 Z" fill="#a0a0a0"/></svg>

<!-- Erase -->
<div class="btn" style="left:58px;top:410px;width:64px;height:25px;"></div>
<div class="t" style="left:76px;top:416px;"><u>E</u>rase</div>
<!-- clock -->
<div class="a" style="left:24px;top:474px;width:133px;height:56px;background:#e6e6e6;"></div>
<div class="a" style="left:25px;top:475px;width:131px;height:54px;background:#000;box-sizing:border-box;border:2px solid #808080;box-shadow:inset 0 0 0 2px #404040;"></div>
<div class="t" style="left:24px;top:481px;width:131px;text-align:center;font-size:19.9px;line-height:22px;color:#ffff00;">2014 Feb 10</div>
<div class="t" style="left:24px;top:503px;width:131px;text-align:center;font-size:19.9px;line-height:22px;color:#ffff00;">20:06:43</div>

<!-- status -->
<div class="a" style="left:12px;top:555px;width:694px;height:1px;background:#000;"></div>
<div class="a" style="left:12px;top:555px;width:98px;height:23px;background:#000;"></div>
<div class="a" style="left:14px;top:557px;width:96px;height:21px;background:#ffff00;"></div>
<div class="t" style="left:21px;top:561px;letter-spacing:-0.2px;">Rx Noise:  19  dB</div>
<div class="a" style="left:643px;top:555px;width:62px;height:23px;background:#000;"></div>
<div class="a" style="left:645px;top:557px;width:60px;height:21px;background:#00ff00;"></div>
<div class="t" style="left:651px;top:561px;font-size:10.6px;">Receiving</div>
</body></html>
